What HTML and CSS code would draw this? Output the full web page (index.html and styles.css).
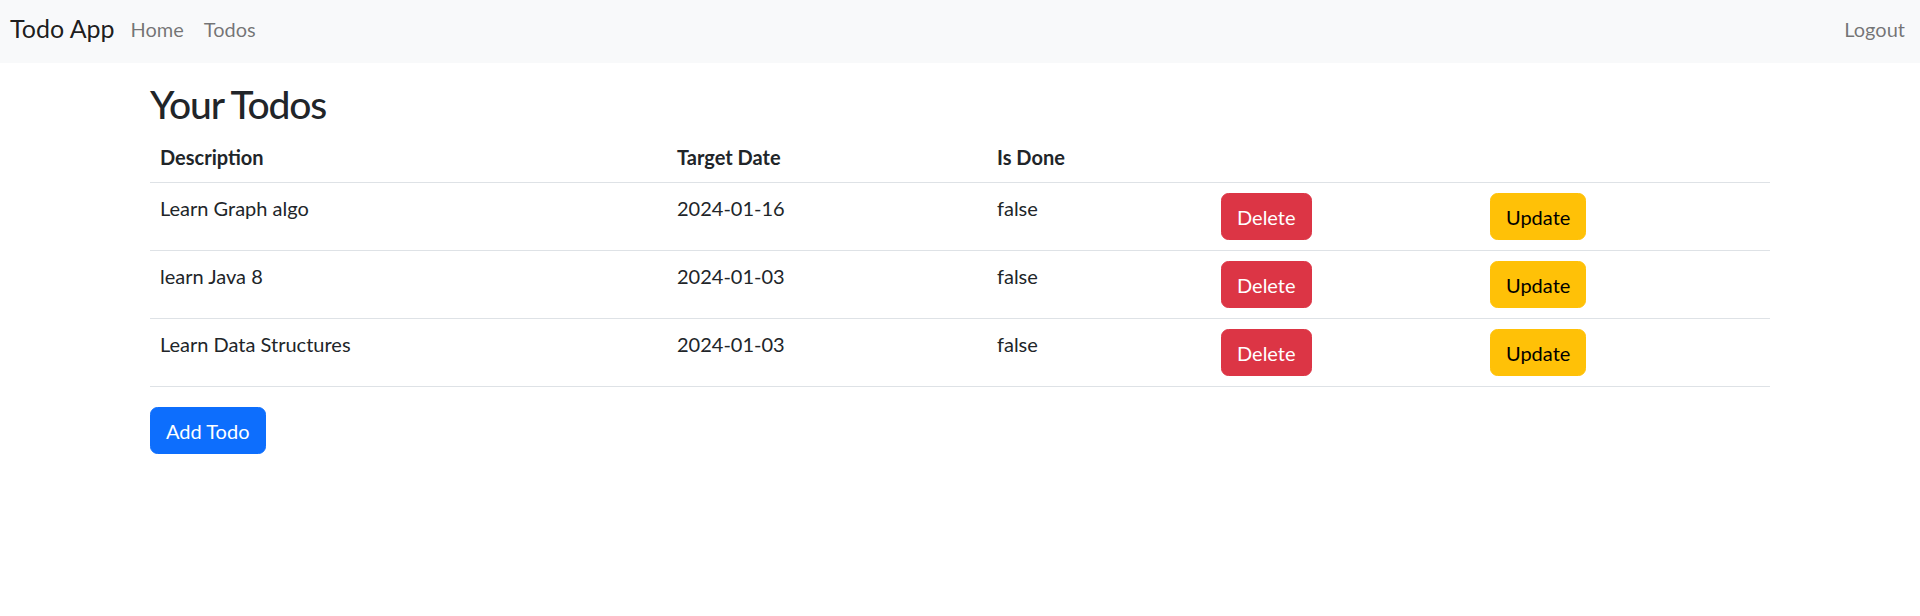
FILE: index.html
```html
<!DOCTYPE html>
<html lang="en">
<head>
<meta charset="utf-8">
<title>Todo App</title>
<link rel="stylesheet" href="styles.css">
</head>
<body>
<nav class="navbar">
  <div class="nav-left">
    <a class="brand" href="#">Todo App</a>
    <a class="nav-link" href="#">Home</a>
    <a class="nav-link" href="#">Todos</a>
  </div>
  <a class="nav-link" href="#">Logout</a>
</nav>
<main class="container">
  <h2 class="title">Your Todos</h2>
  <table class="table">
    <thead>
      <tr>
        <th class="c-desc">Description</th>
        <th class="c-date">Target Date</th>
        <th class="c-done">Is Done</th>
        <th class="c-del"></th>
        <th class="c-upd"></th>
      </tr>
    </thead>
    <tbody>
      <tr>
        <td>Learn Graph algo</td>
        <td>2024-01-16</td>
        <td>false</td>
        <td><a class="btn btn-danger" href="#">Delete</a></td>
        <td><a class="btn btn-warning" href="#">Update</a></td>
      </tr>
      <tr>
        <td>learn Java 8</td>
        <td>2024-01-03</td>
        <td>false</td>
        <td><a class="btn btn-danger" href="#">Delete</a></td>
        <td><a class="btn btn-warning" href="#">Update</a></td>
      </tr>
      <tr>
        <td>Learn Data Structures</td>
        <td>2024-01-03</td>
        <td>false</td>
        <td><a class="btn btn-danger" href="#">Delete</a></td>
        <td><a class="btn btn-warning" href="#">Update</a></td>
      </tr>
    </tbody>
  </table>
  <a class="btn btn-primary" href="#">Add Todo</a>
</main>
</body>
</html>
```

FILE: styles.css
```css
* { box-sizing: border-box; }
html, body { margin: 0; padding: 0; }
body {
  font-family: Lato, "Noto Sans", "Liberation Sans", sans-serif;
  font-size: 20px;
  line-height: 1.5;
  color: #212529;
  background: #fff;
}
a { text-decoration: none; }

.navbar {
  height: 63px;
  background: #f8f9fa;
  display: flex;
  align-items: center;
  justify-content: space-between;
  padding: 0 5px 5px 10px;
}
.nav-left { display: flex; align-items: center; }
.brand {
  font-size: 25px;
  line-height: 37.5px;
  color: rgba(0,0,0,.9);
  margin-right: 6px;
}
.nav-link {
  color: rgba(0,0,0,.55);
  padding: 10px 10px;
  line-height: 30px;
}

.container {
  width: 1650px;
  margin: 0 auto;
  padding: 11.3px 15px 0;
}
.title {
  margin: 0 0 10px;
  padding-top: 12px;
  font-size: 39px;
  letter-spacing: -1.2px;
  font-weight: 500;
  line-height: 36px;
}
.table {
  width: 100%;
  border-collapse: collapse;
  margin-bottom: 20px;
  vertical-align: top;
}
.table th, .table td {
  padding: 10px;
  border-bottom: 1.25px solid #dee2e6;
  text-align: left;
  vertical-align: top;
}
.table th { font-weight: 700; }
.c-desc { width: 517px; }
.c-date { width: 320px; }
.c-done { width: 224px; }
.c-del { width: 269px; }
.c-upd { width: 290px; }

.btn {
  display: inline-block;
  padding: 7.5px 15px;
  border: 1.25px solid transparent;
  border-radius: 7.5px;
  font-size: 20px;
  line-height: 30px;
  text-align: center;
  vertical-align: middle;
}
.btn-danger { background: #dc3545; border-color: #dc3545; color: #fff; }
.btn-warning { background: #ffc107; border-color: #ffc107; color: #000; }
.btn-primary { background: #0d6efd; border-color: #0d6efd; color: #fff; }
```
